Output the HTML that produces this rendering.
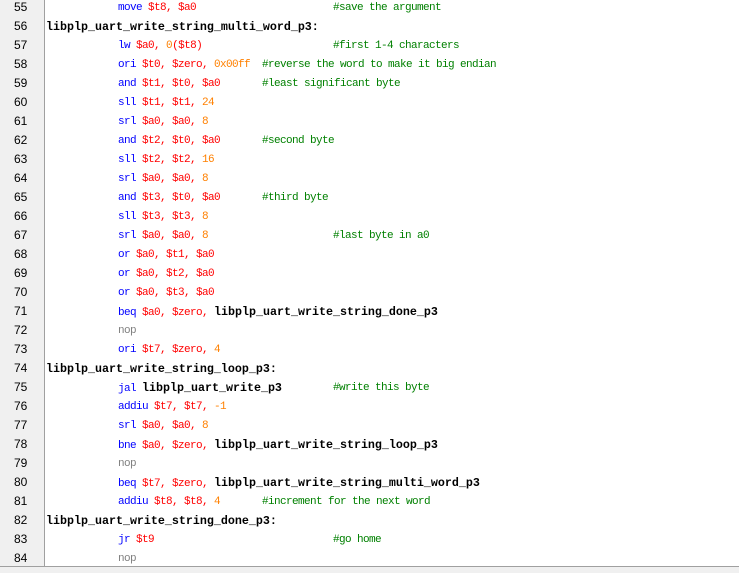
<!DOCTYPE html><html><head><style>
body{margin:0;width:739px;height:573px;overflow:hidden;background:#fff;position:relative;font-family:"Liberation Mono","Noto Sans CJK SC",monospace;font-size:11px;letter-spacing:-0.6px}
.g{position:absolute;left:0;top:0;width:44px;height:567px;background:#f0f0f0;border-right:1px solid #a0a0a0}
.bt{position:absolute;left:0;top:566px;width:739px;height:1px;background:#a0a0a0}
.bb{position:absolute;left:0;top:567px;width:739px;height:6px;background:#f0f0f0}
.n{position:absolute;left:14px;font-family:"Liberation Sans",sans-serif;font-size:12px;letter-spacing:0;color:#000}
.l{position:absolute;white-space:pre;line-height:19px}
.k{color:#0000ff}.r{color:#ff0000}.o{color:#ff8000}.c{color:#008000}.b{font-weight:bold;color:#000;font-size:11.67px;letter-spacing:0}.p{color:#808080}
</style></head><body>
<div class="g"></div><div class="bt"></div><div class="bb"></div>
<div id="c"></div>
<script>
var L=[
["i",'<span class="k">move</span> <span class="r">$t8, $a0</span>',333,'#save the argument'],
["l",'libplp_uart_write_string_multi_word_p3:'],
["i",'<span class="k">lw</span> <span class="r">$a0, </span><span class="o">0</span><span class="r">($t8)</span>',333,'#first 1-4 characters'],
["i",'<span class="k">ori</span> <span class="r">$t0, $zero, </span><span class="o">0x00ff</span>',262,'#reverse the word to make it big endian'],
["i",'<span class="k">and</span> <span class="r">$t1, $t0, $a0</span>',262,'#least significant byte'],
["i",'<span class="k">sll</span> <span class="r">$t1, $t1, </span><span class="o">24</span>'],
["i",'<span class="k">srl</span> <span class="r">$a0, $a0, </span><span class="o">8</span>'],
["i",'<span class="k">and</span> <span class="r">$t2, $t0, $a0</span>',262,'#second byte'],
["i",'<span class="k">sll</span> <span class="r">$t2, $t2, </span><span class="o">16</span>'],
["i",'<span class="k">srl</span> <span class="r">$a0, $a0, </span><span class="o">8</span>'],
["i",'<span class="k">and</span> <span class="r">$t3, $t0, $a0</span>',262,'#third byte'],
["i",'<span class="k">sll</span> <span class="r">$t3, $t3, </span><span class="o">8</span>'],
["i",'<span class="k">srl</span> <span class="r">$a0, $a0, </span><span class="o">8</span>',333,'#last byte in a0'],
["i",'<span class="k">or</span> <span class="r">$a0, $t1, $a0</span>'],
["i",'<span class="k">or</span> <span class="r">$a0, $t2, $a0</span>'],
["i",'<span class="k">or</span> <span class="r">$a0, $t3, $a0</span>'],
["i",'<span class="k">beq</span> <span class="r">$a0, $zero, </span><span class="b">libplp_uart_write_string_done_p3</span>'],
["i",'<span class="p">nop</span>'],
["i",'<span class="k">ori</span> <span class="r">$t7, $zero, </span><span class="o">4</span>'],
["l",'libplp_uart_write_string_loop_p3:'],
["i",'<span class="k">jal</span> <span class="b">libplp_uart_write_p3</span>',333,'#write this byte'],
["i",'<span class="k">addiu</span> <span class="r">$t7, $t7, </span><span class="o">-1</span>'],
["i",'<span class="k">srl</span> <span class="r">$a0, $a0, </span><span class="o">8</span>'],
["i",'<span class="k">bne</span> <span class="r">$a0, $zero, </span><span class="b">libplp_uart_write_string_loop_p3</span>'],
["i",'<span class="p">nop</span>'],
["i",'<span class="k">beq</span> <span class="r">$t7, $zero, </span><span class="b">libplp_uart_write_string_multi_word_p3</span>'],
["i",'<span class="k">addiu</span> <span class="r">$t8, $t8, </span><span class="o">4</span>',262,'#increment for the next word'],
["l",'libplp_uart_write_string_done_p3:'],
["i",'<span class="k">jr</span> <span class="r">$t9</span>',333,'#go home'],
["i",'<span class="p">nop</span>']
];
var h='';
L.forEach(function(x,i){var t=-1+19*i;
h+='<div class="n" style="top:'+(t+1)+'px;line-height:15px">'+(55+i)+'</div>';
if(x[0]=="l")h+='<div class="l b" style="left:46px;top:'+t+'px">'+x[1]+'</div>';
else h+='<div class="l" style="left:118px;top:'+t+'px">'+x[1]+'</div>';
if(x[2])h+='<div class="l c" style="left:'+x[2]+'px;top:'+t+'px">'+x[3]+'</div>';
});
document.getElementById('c').innerHTML=h;
</script>
</body></html>
